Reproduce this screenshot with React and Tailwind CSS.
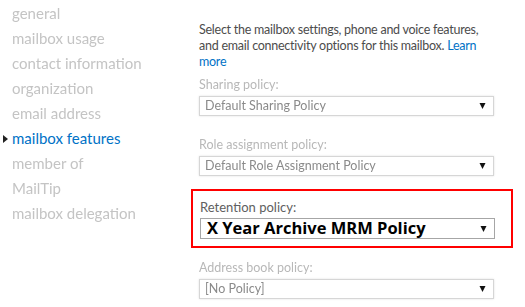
import React from "react";

const navItems = [
  "general",
  "mailbox usage",
  "contact information",
  "organization",
  "email address",
  "mailbox features",
  "member of",
  "MailTip",
  "mailbox delegation",
];

const Arrow = () => (
  <svg width="7" height="6" viewBox="0 0 7 6" className="shrink-0">
    <path d="M0.5 0 H6.5 L3.5 6 Z" fill="#111" />
  </svg>
);

// faded field (out of focus in the screenshot)
const FadedField = ({ label, value, className = "" }) => (
  <div className={"blur-[0.7px] " + className}>
    <div className="text-[12.5px] leading-[14px] text-[#b8b8b8]">{label}</div>
    <div className="mt-[4px] flex h-[20px] w-[295px] items-center justify-between border border-[#d6d6d6] bg-white pl-[5px] pr-[7px] shadow-[0_0_2px_rgba(0,0,0,0.12)]">
      <span className="text-[12.5px] text-[#8a8a8a]">{value}</span>
      <Arrow />
    </div>
  </div>
);

const App = () => {
  return (
    <div
      className="flex h-[307px] w-[525px] bg-white"
      style={{ fontFamily: 'Lato, "Open Sans", sans-serif' }}
    >
      {/* Left nav */}
      <div className="w-[191px] shrink-0 pt-[1px]">
        {navItems.map((item) => {
          const active = item === "mailbox features";
          return (
            <div key={item} className="relative flex h-[25px] items-center pl-[12px]">
              {active && (
                <svg width="5" height="8" viewBox="0 0 5 8" className="absolute left-[3px] top-[9px]">
                  <path d="M0 0 L5 4 L0 8 Z" fill="#222" />
                </svg>
              )}
              <span
                className={
                  active
                    ? "text-[15px] text-[#0072c6]"
                    : "text-[15px] text-[#c4c4c4] blur-[0.7px]"
                }
              >
                {item}
              </span>
            </div>
          );
        })}
      </div>

      {/* Right panel */}
      <div className="w-[322px] pt-[22px]">
        <div className="pl-[8px]">
          <p className="w-[292px] text-[12.5px] leading-[16px] tracking-[-0.25px] text-[#4c4c4c]">
            Select the mailbox settings, phone and voice features, and email
            connectivity options for this mailbox.{" "}
            <a href="#" className="text-[#0072c6]">
              Learn more
            </a>
          </p>
          <FadedField label="Sharing policy:" value="Default Sharing Policy" className="mt-[8px]" />
          <FadedField
            label="Role assignment policy:"
            value="Default Role Assignment Policy"
            className="mt-[22px]"
          />
        </div>

        {/* Highlighted retention policy */}
        <div className="mt-[13px] border-2 border-[#ff0000] pb-[7px] pl-[7px] pt-[9px]">
          <div className="text-[13px] leading-[14px] text-[#606060]">Retention policy:</div>
          <div className="mt-[4px] flex h-[21px] w-[295px] items-center justify-between border border-[#a6a6a6] bg-white pl-[6px] pr-[7px]">
            <span
              className="text-[16.5px] font-bold leading-none text-black"
              style={{ fontFamily: '"Open Sans", sans-serif' }}
            >
              X Year Archive MRM Policy
            </span>
            <Arrow />
          </div>
        </div>

        <div className="pl-[8px]">
          <FadedField label="Address book policy:" value="[No Policy]" className="mt-[13px]" />
        </div>
      </div>
    </div>
  );
};

export default App;
